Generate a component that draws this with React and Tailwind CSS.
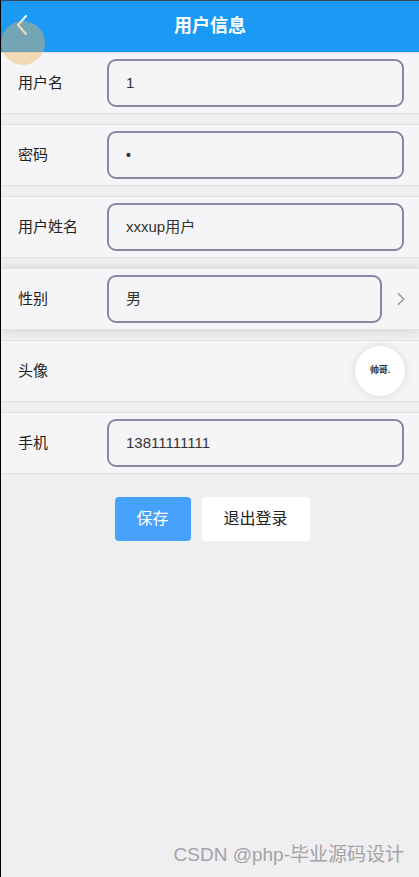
import { ChevronRight } from "lucide-react";

const font = { fontFamily: '"Liberation Sans", "Noto Sans CJK SC", sans-serif' };

function Field({ label, value, arrow, shadow }) {
  return (
    <div
      className={`h-[62px] flex items-center border-y border-[#e1e0e3] bg-[#f5f4f6] pl-[17px] ${
        shadow ? "shadow-[0_0_10px_rgba(0,0,0,0.13)] relative" : ""
      }`}
    >
      <span className="w-[89px] text-[15px] text-[#222]">{label}</span>
      <div
        className={`h-[48px] flex items-center rounded-[9px] border-2 border-[#8a85a6] pl-[17px] text-[15px] text-[#333] ${
          arrow ? "w-[275px]" : "w-[297px]"
        }`}
      >
        {value}
      </div>
      {arrow && (
        <ChevronRight size={22} strokeWidth={1.5} className="ml-[8px] text-[#9a9a9a]" />
      )}
    </div>
  );
}

export default function App() {
  return (
    <div
      className="relative min-h-[877px] bg-[#efeef1] border-l border-black flex flex-col"
      style={font}
    >
      {/* Header */}
      <div className="h-[52px] bg-[#1b9af5] border-t border-[#3a4a55] flex items-center justify-center relative">
        <svg
          width="12"
          height="20"
          viewBox="0 0 12 20"
          className="absolute left-[15px] top-[14px]"
          fill="none"
          stroke="#eef6fd"
          strokeWidth="2"
          strokeLinecap="round"
          strokeLinejoin="round"
        >
          <polyline points="10,1 2,10 10,19" />
        </svg>
        <h1 className="text-[18px] font-bold text-white">用户信息</h1>
      </div>

      {/* Form */}
      <div className="flex flex-col gap-[10px]">
        <Field label="用户名" value="1" />
        <Field label="密码" value={<span className="text-[14px] font-bold leading-none">•</span>} />
        <Field label="用户姓名" value="xxxup用户" />
        <Field label="性别" value="男" arrow shadow />
        <div className="h-[62px] flex items-center justify-between border-y border-[#e1e0e3] bg-[#f5f4f6] pl-[17px] pr-[14px]">
          <span className="text-[15px] text-[#222]">头像</span>
          <div className="w-[50px] h-[50px] rounded-full bg-white shadow-[0_0_8px_rgba(0,0,0,0.12)] flex items-center justify-center">
            <span className="text-[9px] font-bold text-[#333] tracking-tight">帅哥.</span>
          </div>
        </div>
        <Field label="手机" value="13811111111" />
      </div>

      {/* Buttons */}
      <div className="flex justify-center gap-[11px] mt-[23px] pl-[4px]">
        <button className="w-[76px] h-[44px] rounded-[4px] bg-[#46a2fc] text-white text-[16px]">
          保存
        </button>
        <button className="w-[108px] h-[44px] rounded-[4px] bg-white text-[#222] text-[16px]">
          退出登录
        </button>
      </div>

      {/* Touch indicator */}
      <div className="absolute left-0 top-[21px] w-[44px] h-[44px] rounded-full bg-[rgba(240,180,90,0.42)]" />

      {/* Watermark */}
      <div className="absolute right-[15px] bottom-[8px] text-[19px] text-[#a3a3a5]">
        CSDN @php-毕业源码设计
      </div>
    </div>
  );
}
